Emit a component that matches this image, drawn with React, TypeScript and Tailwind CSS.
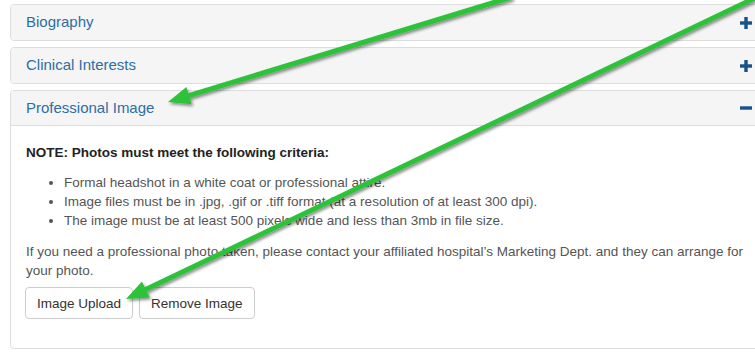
import React from "react";

function Arrow({ x1, y1, x2, y2 }: { x1: number; y1: number; x2: number; y2: number }) {
  const dx = x2 - x1;
  const dy = y2 - y1;
  const len = Math.sqrt(dx * dx + dy * dy);
  const ux = dx / len;
  const uy = dy / len;
  const hl = 22;
  const hw = 9;
  const bx = x2 - ux * hl;
  const by = y2 - uy * hl;
  const nx = -uy;
  const ny = ux;
  const pts = `${x2},${y2} ${bx + nx * hw},${by + ny * hw} ${bx - nx * hw},${by - ny * hw}`;
  return (
    <g filter="url(#shadow)">
      <line x1={x1} y1={y1} x2={bx + ux * 2} y2={by + uy * 2} stroke="#2ec23a" strokeWidth={5} />
      <polygon points={pts} fill="#2ec23a" />
    </g>
  );
}

function Plus() {
  return (
    <svg width="12" height="12" viewBox="0 0 12 12">
      <rect x="4.3" y="0" width="3.4" height="12" fill="#17528a" />
      <rect x="0" y="4.3" width="12" height="3.4" fill="#17528a" />
    </svg>
  );
}

function Minus() {
  return (
    <svg width="12" height="12" viewBox="0 0 12 12">
      <rect x="0" y="4.3" width="12" height="3.4" fill="#17528a" />
    </svg>
  );
}

function Header({ title, open }: { title: string; open?: boolean }) {
  return (
    <div
      className={`flex h-[35px] items-center justify-between bg-[#f5f5f5] pl-[15px] pr-[17px] ${
        open ? "border-b border-[#ddd]" : ""
      }`}
    >
      <span className="text-[15px] text-[#2e6da4]">{title}</span>
      {open ? <Minus /> : <Plus />}
    </div>
  );
}

export default function App() {
  return (
    <div
      className="relative h-[352px] w-[755px] overflow-hidden bg-white"
      style={{ fontFamily: '"Liberation Sans", Arial, sans-serif' }}
    >
      <div className="flex w-[770px] flex-col gap-[6px] pl-[10px] pt-[4px]">
        <div className="overflow-hidden rounded-[4px] border border-[#ddd]">
          <Header title="Biography" />
        </div>
        <div className="overflow-hidden rounded-[4px] border border-[#ddd]">
          <Header title="Clinical Interests" />
        </div>
        <div className="overflow-hidden rounded-[4px] border border-[#ddd]">
          <Header title="Professional Image" open />
          <div className="h-[222px] pl-[14px] pr-[15px] pt-[17px] text-[13.5px] leading-[19px] text-[#555]">
            <p className="pl-[1px] font-bold text-[#222]">NOTE: Photos must meet the following criteria:</p>
            <ul className="mt-[11px] list-disc pl-[39px]">
              <li>Formal headshot in a white coat or professional attire.</li>
              <li>Image files must be in .jpg, .gif or .tiff format (at a resolution of at least 300 dpi).</li>
              <li>The image must be at least 500 pixels wide and less than 3mb in file size.</li>
            </ul>
            <p className="mt-[12px] pl-[1px]">
              If you need a professional photo taken, please contact your affiliated hospital’s Marketing Dept. and
              they can arrange for your photo.
            </p>
            <div className="mt-[7px] flex gap-[6px]">
              <button className="h-[32px] rounded-[4px] border border-[#ccc] bg-white px-[11px] text-[13.5px] text-[#333]">
                Image Upload
              </button>
              <button className="h-[32px] rounded-[4px] border border-[#ccc] bg-white px-[11px] text-[13.5px] text-[#333]">
                Remove Image
              </button>
            </div>
          </div>
        </div>
      </div>
      <svg className="pointer-events-none absolute left-0 top-0" width="755" height="352">
        <defs>
          <filter id="shadow" x="-20%" y="-20%" width="140%" height="140%">
            <feDropShadow dx="1.5" dy="2" stdDeviation="1.5" floodColor="#000" floodOpacity="0.45" />
          </filter>
        </defs>
        <Arrow x1={512} y1={-3} x2={168} y2={102} />
        <Arrow x1={757} y1={-3} x2={126} y2={299} />
      </svg>
    </div>
  );
}
